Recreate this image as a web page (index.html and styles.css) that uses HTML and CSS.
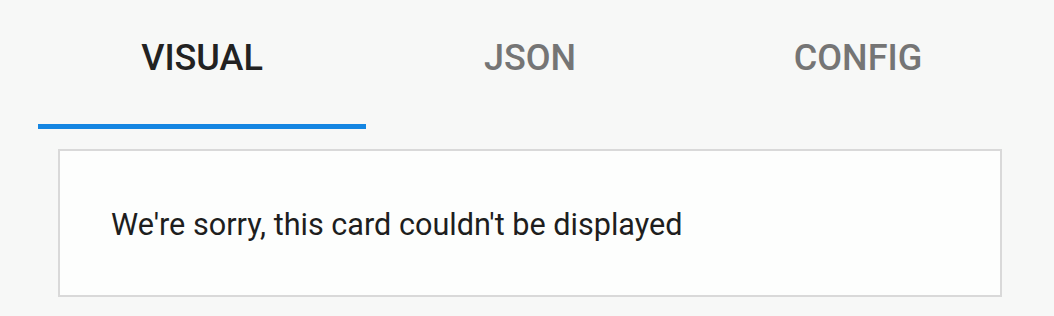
FILE: index.html
```
<!DOCTYPE html>
<html>
<head>
<meta charset="utf-8">
<link rel="stylesheet" href="styles.css">
</head>
<body>
<div class="page">
  <div class="tabs">
    <div class="tab active">VISUAL</div>
    <div class="tab">JSON</div>
    <div class="tab">CONFIG</div>
  </div>
  <div class="card">
    <p class="msg">We're sorry, this card couldn't be displayed</p>
  </div>
</div>
</body>
</html>
```
FILE: styles.css
```
html, body {
  margin: 0;
  padding: 0;
  background: #f7f8f7;
}
.page {
  width: 1054px;
  height: 316px;
  font-family: Roboto, "Liberation Sans", sans-serif;
  padding: 0 32px 0 38px;
  box-sizing: border-box;
}
.tabs {
  display: grid;
  grid-template-columns: repeat(3, 328px);
  height: 129px;
}
.tab {
  display: flex;
  justify-content: center;
  padding-top: 34px;
  box-sizing: border-box;
  font-size: 36px;
  font-weight: 500;
  color: #757575;
  line-height: 48px;
}
.tab.active {
  color: #222;
  border-bottom: 5px solid #1586e2;
}
.card {
  margin: 20px 0 0 20px;
  width: 944px;
  height: 148px;
  box-sizing: border-box;
  border: 2px solid #d9d9d9;
  background: #fdfefd;
  display: flex;
  align-items: center;
  padding-left: 51px;
  padding-top: 3px;
}
.msg {
  margin: 0;
  font-size: 30.6px;
  line-height: 36px;
  color: #1e1e1e;
}
```
